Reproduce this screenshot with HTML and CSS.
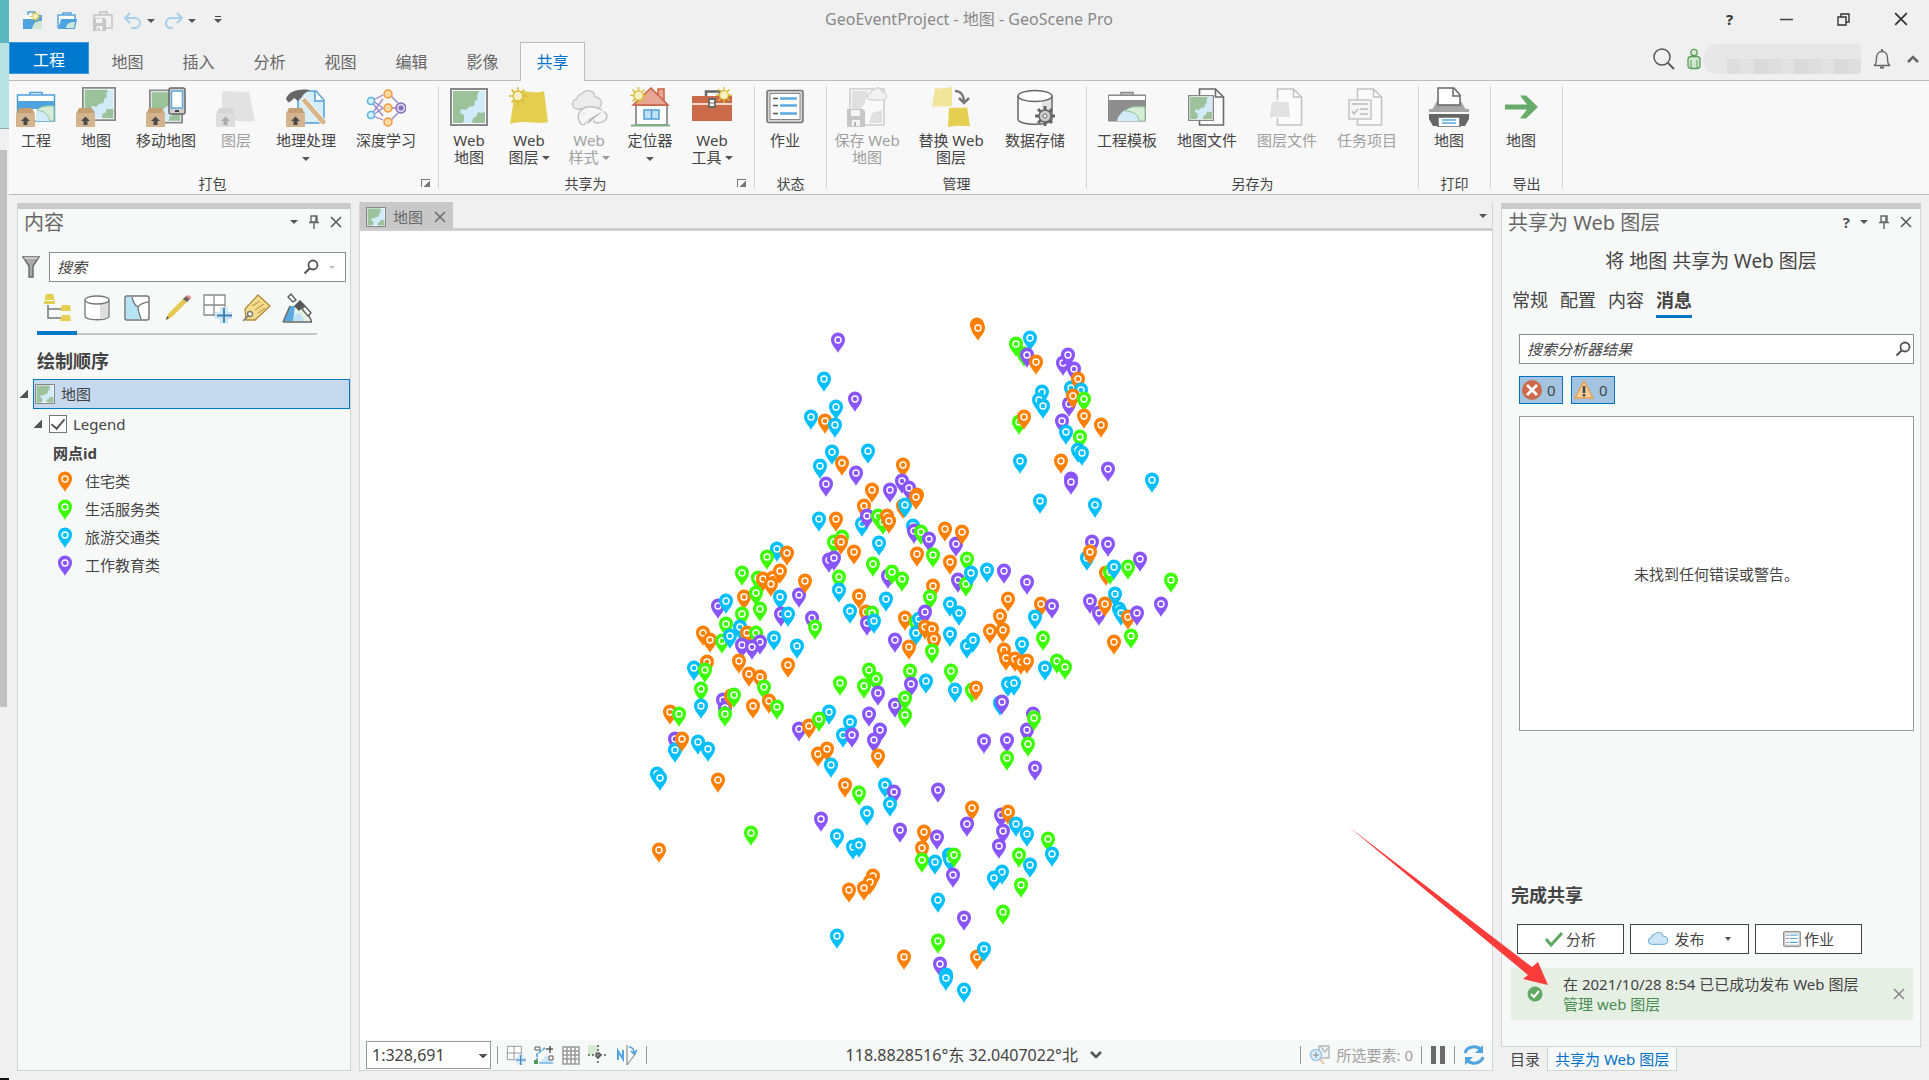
FILE: index.html
```html
<!DOCTYPE html>
<html lang="zh-CN">
<head>
  <meta charset="UTF-8" />
  <meta name="viewport" content="width=device-width, initial-scale=1.0"/>
  <title>GeoEventProject - 地图 - GeoScene Pro</title>
  <link rel="stylesheet" href="styles.css">
</head>
<body>

  <!-- shared icons -->
  <svg class="defs" width="0" height="0" aria-hidden="true">
    <symbol id="i-box" viewBox="0 0 40 40">
      <path d="M3 21h13l3 6H0z" fill="#c39f72"/><path d="M0 26h19v14H0z" fill="#d4b48f"/>
      <path d="M9.500 29.500l4.500 4.500h-2.500v4h-4v-4H5z" fill="#4a4a4a"/>
    </symbol>
    <symbol id="i-map" viewBox="0 0 38 38">
      <path d="M1 1h36v36H1z" fill="#fff" stroke="#888" stroke-width="2"/>
      <path d="M3 3h32v32H3z" fill="#d3eaf8"/>
      <path d="M3 3h26l-2 5 1 3-3 2-1 5-5 1-3 3-5-1-1 4 4 2v6l-2 2H3z" fill="#9cc29b"/>
      <path d="M22 35l1-5 3-1 2-5 3 1 4-1v11z" fill="#9cc29b"/>
    </symbol>
    <symbol id="i-sun" viewBox="0 0 18 18">
      <path d="M9 0v18M0 9h18M2.600 2.600l12.800 12.800M15.400 2.600L2.600 15.400" stroke="#d9bb35" stroke-width="1.500"/>
      <circle cx="9" cy="9" r="5" fill="#f8f0c0" stroke="#d9bb35" stroke-width="1.300"/>
    </symbol>
    <symbol id="i-page" viewBox="0 0 26 38">
      <path d="M1 1h16l8 8v28H1z" fill="#fbfbfb" stroke="currentColor" stroke-width="1.600"/>
      <path d="M17 1v8h8" fill="none" stroke="currentColor" stroke-width="1.600"/>
    </symbol>
    <symbol id="i-floppy" viewBox="0 0 18 18">
      <path d="M0 0h16l2 2v16H0z" fill="#c6c6c6"/><path d="M4 1h9v6H4zM5 11h8v6H5z" fill="#f4f4f4"/><path d="M7 13h2v4H7z" fill="#b5b5b5"/>
    </symbol>
    <symbol id="i-cloud" viewBox="0 0 30 20">
      <path d="M6 19a5 5 0 0 1-1-10 5 5 0 0 1 5-5 7 7 0 0 1 13 3 6 6 0 0 1 1 12z" stroke="currentColor" stroke-width="1.300"/>
    </symbol>
    <symbol id="i-list" viewBox="0 0 38 34">
      <rect x="1" y="1" width="36" height="32" rx="2" fill="#d6d6d6" stroke="#777" stroke-width="1.600"/>
      <path d="M4 4h30v26H4z" fill="#fff" stroke="#888"/>
      <path d="M7 9h5M7 16h5M7 24h5" stroke="#555" stroke-width="1.600"/>
      <path d="M14 9h17M14 16h17M14 24h17" stroke="#5aa9e0" stroke-width="2.500"/>
    </symbol>
    <symbol id="i-pushpin" viewBox="0 0 12 14">
      <path d="M3 1h6v6H3zM1 7.500h10M6 8v6M8 1v6" fill="none" stroke="#666" stroke-width="1.400"/>
    </symbol>
    <symbol id="i-x" viewBox="0 0 12 12">
      <path d="M1 1l10 10M11 1L1 11" stroke="currentColor" stroke-width="1.500"/>
    </symbol>
    <symbol id="i-find" viewBox="0 0 16 16">
      <circle cx="10" cy="6" r="4.500" fill="none" stroke="#555" stroke-width="1.800"/><path d="M7 9l-5.500 5.500" stroke="#555" stroke-width="2.200"/>
    </symbol>
    <symbol id="i-grid-add" viewBox="0 0 30 30">
      <path d="M2 2h21v20H2zM12 2v20M2 12h21" fill="#fff" stroke="#8a8a8a" stroke-width="1.300"/>
      <path d="M13 19h5v-5h8v5h4v7h-4v4h-8v-4h-5z" fill="#cfe6f7"/>
      <path d="M22 15v15M15 22.500h15" stroke="#3c7fb5" stroke-width="1.800"/>
    </symbol>
    <symbol id="i-pin" viewBox="-8 -8 16 21" overflow="visible">
      <path d="M0 13C-1.500 9-7 5.500-7-.5a7 7 0 0 1 14 0C7 5.500 1.500 9 0 13z" fill="currentColor"/>
      <circle r="3" fill="none" stroke="#fff" stroke-width="1.400"/>
    </symbol>
  </svg>

  <div class="behind">
    <div class="behind-top"></div>
    <div class="behind-mid"></div>
    <div class="behind-gap"></div>
    <div class="behind-thumb"></div>
    <div class="behind-rest"></div>
  </div>

  <div class="app">
    <header class="titlebar">
      <div class="quick">
        <button class="icon-btn" aria-label="新建工程"><svg width="22" height="20" viewBox="0 0 22 20"><path d="M6 4V1h7v3" fill="none" stroke="#55a3dc" stroke-width="1.500"/><path d="M1 4h19v14H1z" fill="#4fa3de"/><path d="M1 4h10v4H1z" fill="#fff"/><path d="M10 18c1-6 4-8 10-8v8z" fill="#cfe8d5"/><use href="#i-sun" x="8" y="0" width="11" height="11"/></svg></button>
        <button class="icon-btn" aria-label="打开工程"><svg width="22" height="20" viewBox="0 0 22 20"><path d="M6 4V2h8v2M1 17V4h17v4" fill="#fff" stroke="#55a3dc" stroke-width="1.500"/><path d="M1 18L4 8h16l-2 10z" fill="#4fa3de"/><path d="M9 17c1-5 4-6 9-6l-1 6z" fill="#cfe8d5"/></svg></button>
        <button class="icon-btn" aria-label="保存工程"><svg width="22" height="20" viewBox="0 0 22 20"><path d="M8 4V1h7v3M2 10V4h18v13h-6" fill="none" stroke="#c4c4c4" stroke-width="1.500"/><use href="#i-floppy" x="1" y="7" width="13" height="13"/></svg></button>
        <button class="icon-btn undo" aria-label="撤消"><svg width="18" height="18" viewBox="0 0 18 18"><path d="M6 1L1 6l5 5M1 6h10a5 5 0 0 1 0 10H7" fill="none" stroke="#a9d0e8" stroke-width="2"/></svg></button>
        <i class="caret"></i>
        <button class="icon-btn undo" aria-label="恢复"><svg width="18" height="18" viewBox="0 0 18 18"><path d="M12 1l5 5-5 5M17 6H7a5 5 0 0 0-2 10h3" fill="none" stroke="#a9d0e8" stroke-width="2"/></svg></button>
        <i class="caret"></i>
        <i class="caret caret-line"></i>
      </div>
      <div class="window-title">GeoEventProject - 地图 - GeoScene Pro</div>
      <div class="window-btns">
        <button aria-label="帮助"><b>?</b></button>
        <button aria-label="最小化"><svg width="13" height="13"><path d="M0 6.500h13" stroke="#444" stroke-width="1.500"/></svg></button>
        <button aria-label="还原"><svg width="13" height="13" viewBox="0 0 13 13"><path d="M1 4h8v8H1zM4 4V1h8v8H9" fill="none" stroke="#333" stroke-width="1.400"/></svg></button>
        <button aria-label="关闭"><svg width="14" height="14" viewBox="0 0 12 12"><use href="#i-x"/></svg></button>
      </div>
    </header>

    <nav class="tabs">
      <a href="#" class="tab-file">工程</a>
      <a href="#">地图</a>
      <a href="#">插入</a>
      <a href="#">分析</a>
      <a href="#">视图</a>
      <a href="#">编辑</a>
      <a href="#">影像</a>
      <a href="#" class="active">共享</a>
      <div class="account">
        <svg width="22" height="22" viewBox="0 0 22 22"><circle cx="9" cy="9" r="8" fill="none" stroke="#555" stroke-width="1.500"/><path d="M15 15l6 6" stroke="#555" stroke-width="1.800"/></svg>
        <svg width="14" height="22" viewBox="0 0 14 22"><circle cx="7" cy="4.500" r="3.200" fill="#d9edd8" stroke="#5a9e5a" stroke-width="1.300"/><rect x="1" y="8.500" width="12" height="12" rx="3" fill="#cfe8cf" stroke="#5a9e5a" stroke-width="1.300"/><path d="M4 12v8M10 12v8" stroke="#5a9e5a"/></svg>
        <div class="masked"><i></i><i></i><i></i><i></i><i></i><i></i><i></i><i></i><i></i><i></i></div>
        <svg class="bell" width="18" height="20" viewBox="0 0 18 20"><path d="M1 16.500c2.500-1 2.500-4 2.500-7.500 0-3.500 2-6.500 5.500-6.500S14.500 5.500 14.500 9c0 3.500 0 6.500 2.500 7.500z" fill="none" stroke="#666" stroke-width="1.400"/><path d="M7 18.500h4M9 0v2" stroke="#666" stroke-width="1.800"/></svg>
        <svg width="12" height="8" viewBox="0 0 12 8"><path d="M1 7l5-5 5 5" fill="none" stroke="#666" stroke-width="2.600"/></svg>
      </div>
    </nav>

    <section class="ribbon">
      <div class="group">
        <div class="group-btns">
          <button><svg viewBox="0 0 40 40"><path d="M14 8V5.500h12V8" fill="none" stroke="#4f9fd8" stroke-width="1.500"/><path d="M1.500 8h37v26h-37z" fill="#fff" stroke="#4f9fd8" stroke-width="1.500"/><path d="M2 14h36v8H2z" fill="#4fa3de"/><path d="M20 34V24c3-4 9-6 18-5v15z" fill="#d3eaf8"/><path d="M21 23c4-4 9-4 17-4v15h-4c-2-7-6-10-13-11z" fill="#d5ecd6" stroke="#8fc49a"/><use href="#i-box"/></svg>工程</button>
          <button><svg viewBox="0 0 40 40"><use href="#i-map" x="6" y="0" width="34" height="34"/><use href="#i-box"/></svg>地图</button>
          <button class="wide"><svg viewBox="0 0 40 40"><use href="#i-map" x="3" y="2" width="34" height="35"/><use href="#i-box"/><rect x="23" y="1" width="16" height="26" rx="2" fill="#d0d0d0" stroke="#666" stroke-width="1.500"/><path d="M25.500 4h11v17h-11z" fill="#fff" stroke="#5aa9e0" stroke-width="1.500"/><path d="M29 24h4" stroke="#444" stroke-width="2"/></svg>移动地图</button>
          <button disabled><svg viewBox="0 0 40 40" class="faded"><path d="M6 5c9-3 16 2 27-1l6 30c-12 2-19-3-33 1z" fill="#e2e2e2"/><path d="M3 21h13l3 6H0z" fill="#d5d5d5"/><path d="M0 26h19v14H0z" fill="#dedede"/><path d="M9.500 29.500l4.500 4.500h-2.500v4h-4v-4H5z" fill="#aaa"/></svg>图层</button>
          <button class="wide"><svg viewBox="0 0 40 40"><path d="M12 4h18l8 9v23H12z" fill="#d7edfa" stroke="#4f9fd8" stroke-width="1.500"/><path d="M29 4v10h9" fill="#fff" stroke="#4f9fd8" stroke-width="1.500"/><path d="M15 14l4-4 21 24c1 3-3 5-5 3z" fill="#d9b58b" stroke="#fff"/><path d="M0 12c2-6 9-11 24-9-4 2-7 4-8 7l-4 4-4-3c-2 2-4 5-6 4z" fill="#666"/><use href="#i-box"/></svg>地理处理<i class="caret"></i></button>
          <button class="wide"><svg viewBox="0 0 40 40"><path d="M5 14l12 15M5 14l12-6M5 28l12-16M5 28l12 5M7 14l10 7M7 28l10-7M24 8l8 8M24 21h7M24 34l8-8" stroke="#9a86c8" stroke-width="1.300"/><g fill="#d7effb" stroke="#55b3df" stroke-width="1.500"><circle cx="5" cy="14" r="3.500"/><circle cx="5" cy="28" r="3.500"/></g><g fill="#fbd9a0" stroke="#ee9a3a" stroke-width="1.500"><circle cx="22" cy="7" r="4"/><circle cx="22" cy="21" r="4"/><circle cx="22" cy="35" r="4"/></g><circle cx="35" cy="21" r="5" fill="#ded5f2" stroke="#8570b8" stroke-width="1.500"/><circle cx="35" cy="21" r="2.500" fill="#8570b8"/></svg>深度学习</button>
        </div>
        <div class="group-foot"><span>打包</span><i class="launcher"></i></div>
      </div>

      <div class="group">
        <div class="group-btns">
          <button><svg viewBox="0 0 40 40"><use href="#i-map" x="1" y="1" width="38" height="38"/></svg>Web<br>地图</button>
          <button><svg viewBox="0 0 40 40"><path d="M6 5c10-3 17 3 29-1l4 31c-12 3-22-3-38 2z" fill="#e4cf50"/><use href="#i-sun" x="0" y="0" width="18" height="18"/></svg>Web<br><span>图层<i class="caret"></i></span></button>
          <button disabled><svg viewBox="0 0 40 40" fill="#ececec"><g color="#c4c4c4"><use href="#i-cloud" x="2" y="3" width="32" height="20"/></g><path d="M12 37c-5-6-3-15 6-17 9-1 18 3 20 9 0 5-6 7-10 7-5 0-3-5-7-4-4 2-5 8-9 5z" fill="#f6f6f6" stroke="#c0c0c0" stroke-width="1.500"/><circle cx="15" cy="27" r="2"/><path d="M38 21L23 34l-6 5 2-7z" fill="#bdbdbd" stroke="#fff"/></svg>Web<br><span>样式<i class="caret"></i></span></button>
          <button class="loc"><svg viewBox="0 0 40 40"><path d="M28 10V2h6v14" fill="#e8a795" stroke="#cc6040" stroke-width="1.500"/><path d="M6 18h31v20H6z" fill="#fff" stroke="#777" stroke-width="1.500"/><path d="M3 18L21 1l17 17z" fill="#e8a795" stroke="#cc6040" stroke-width="1.500"/><path d="M14 23h15v9H14zM21.500 23v9" fill="#bfe0f5" stroke="#4f9fd8" stroke-width="1.500"/><path d="M1 38.500h39" stroke="#7fb07f" stroke-width="2"/><use href="#i-sun" x="0" y="0" width="17" height="17"/></svg>定位器<i class="caret"></i></button>
          <button class="loc"><svg viewBox="0 0 40 40"><path d="M14 10V4.500h14V10" fill="none" stroke="#666" stroke-width="2.500"/><path d="M0 9h40v25H0z" fill="#ca6a49"/><path d="M0 17h40" stroke="#fff" stroke-width="1.500"/><path d="M17 12h6v8h-6z" fill="#fff" stroke="#666" stroke-width="1.800"/><path d="M17 16h6" stroke="#666"/><use href="#i-sun" x="24" y="0" width="16" height="16"/></svg>Web<br><span>工具<i class="caret"></i></span></button>
        </div>
        <div class="group-foot"><span>共享为</span><i class="launcher"></i></div>
      </div>

      <div class="group">
        <div class="group-btns">
          <button><svg viewBox="0 0 40 40"><use href="#i-list" x="1" y="2" width="38" height="35"/></svg>作业</button>
        </div>
        <div class="group-foot"><span>状态</span></div>
      </div>

      <div class="group">
        <div class="group-btns">
          <button disabled class="wide"><svg viewBox="0 0 40 40"><path d="M3 2h34v36H3z" fill="#fafafa" stroke="#ccc" stroke-width="1.500"/><path d="M5 4h16l-3 12-6 8H5zM22 36l3-10 10-3v13z" fill="#e0e0e0"/><g color="#c0c0c0" fill="#f2f2f2"><use href="#i-cloud" x="20" y="0" width="20" height="14"/></g><use href="#i-floppy" x="0" y="22" width="18" height="18"/></svg>保存 Web<br>地图</button>
          <button class="wider"><svg viewBox="0 0 40 40"><path d="M4 1c7 1 10 0 17-1v19c-7 2-12-1-20 1z" fill="#f1e59b"/><path d="M18 21c7-1 12 1 18-1l3 19c-8 0-13-1-22 1z" fill="#e4cf50"/><path d="M24 4c6 0 9 5 9 11M28 11l5 5 5-5" fill="none" stroke="#777" stroke-width="2.500"/></svg>替换 Web<br>图层</button>
          <button class="wide"><svg viewBox="0 0 40 40"><path d="M3 9v23c0 7 34 7 34 0V9" fill="#fafafa" stroke="#666" stroke-width="1.500"/><path d="M27 14l9-4v14h-9z" fill="#e2e2e2"/><ellipse cx="20" cy="9" rx="17" ry="5.500" fill="#fff" stroke="#666" stroke-width="1.500"/><path d="M30 19v20M20 29h20M23 22l14 14M37 22L23 36" stroke="#666" stroke-width="3"/><circle cx="30" cy="29" r="6" fill="#ccc" stroke="#666" stroke-width="1.500"/><circle cx="30" cy="29" r="2" fill="#fff" stroke="#666"/></svg>数据存储</button>
        </div>
        <div class="group-foot"><span>管理</span></div>
      </div>

      <div class="group">
        <div class="group-btns">
          <button class="wide"><svg viewBox="0 0 40 40"><path d="M14 8V5.500h12V8" fill="#ccc" stroke="#888" stroke-width="1.500"/><path d="M1.500 8h37v26h-37z" fill="#8e8e8e" stroke="#888"/><path d="M2 9h36v4H2z" fill="#fff"/><path d="M10 34c2-9 9-15 28-14v14z" fill="#d3eaf8"/><path d="M18 24c4-4 9-5 20-4v14h-6c0-6-6-10-14-10z" fill="#d5ecd6" stroke="#8fc49a"/></svg>工程模板</button>
          <button class="wide"><svg viewBox="0 0 40 40" color="#6a6a6a"><use href="#i-page" x="10" y="1" width="29" height="38"/><use href="#i-map" x="1" y="8" width="26" height="26"/></svg>地图文件</button>
          <button disabled class="wide"><svg viewBox="0 0 40 40" color="#c4c4c4"><use href="#i-page" x="8" y="1" width="29" height="38"/><path d="M4 15c6-3 12 1 18-1l2 17c-7 0-14-2-22 1z" fill="#e2e2e2" stroke="#fff"/></svg>图层文件</button>
          <button disabled class="wide"><svg viewBox="0 0 40 40" color="#c4c4c4"><use href="#i-page" x="8" y="1" width="29" height="38"/><path d="M2 13h22v19H2z" fill="#f6f6f6" stroke="#c4c4c4" stroke-width="1.500"/><path d="M5 17h16M13 22h8M13 27h8M5 24l2 3 4-5" fill="none" stroke="#bbb" stroke-width="1.500"/></svg>任务项目</button>
        </div>
        <div class="group-foot"><span>另存为</span></div>
      </div>

      <div class="group">
        <div class="group-btns">
          <button><svg viewBox="0 0 40 40"><path d="M3 23l5-9h24l5 9z" fill="#a5a5a5"/><path d="M9 18V1h16l6 7v10z" fill="#fff" stroke="#666" stroke-width="1.500"/><path d="M24 1v8h7" fill="none" stroke="#666" stroke-width="1.500"/><path d="M0 22h40v3H0z" fill="#a5a5a5"/><path d="M0 27h40v5l-4 7H4l-4-7z" fill="#666"/><path d="M9 30h22v10H9z" fill="#fff" stroke="#666" stroke-width="1.500"/><path d="M13 33h14M13 36h14" stroke="#5aa9e0" stroke-width="1.500"/></svg>地图</button>
        </div>
        <div class="group-foot"><span>打印</span></div>
      </div>

      <div class="group">
        <div class="group-btns">
          <button><svg viewBox="0 0 40 40"><path d="M4 17.500h22l-7-9h6l12 11.500-12 11.500h-6l7-9H4z" fill="#67ac6b"/></svg>地图</button>
        </div>
        <div class="group-foot"><span>导出</span></div>
      </div>
    </section>

    <main class="work">
      <aside class="pane contents">
        <div class="pane-head">
          <h2>内容</h2>
          <i class="caret"></i>
          <button class="icon-btn" aria-label="固定"><svg width="12" height="14"><use href="#i-pushpin"/></svg></button>
          <button class="icon-btn" aria-label="关闭"><svg width="12" height="12"><use href="#i-x"/></svg></button>
        </div>
        <div class="filter-row">
          <svg width="18" height="22" viewBox="0 0 18 22"><path d="M1 1h16l-6 9v11H7V10z" fill="#aaa" stroke="#666" stroke-width="1.400"/><path d="M2 2h14" stroke="#fff"/></svg>
          <div class="search">
            <input type="text" placeholder="搜索" aria-label="搜索">
            <svg width="16" height="16"><use href="#i-find"/></svg>
            <i class="caret light"></i>
          </div>
        </div>
        <div class="list-by">
          <button class="active" aria-label="按绘制顺序列出"><svg viewBox="0 0 30 30"><path d="M6 12v13h13M6 16h13" fill="none" stroke="#777" stroke-width="1.500"/><path d="M4 1h7l1.500 6h-10zM2 8h11v3H2zM20 12h8l1 6H18zM20 22h8l1 6H18z" fill="#e4cf50"/></svg></button>
          <button aria-label="按数据源列出"><svg viewBox="0 0 30 30"><path d="M3 7v16c0 5 24 5 24 0V7" fill="#fff" stroke="#777" stroke-width="1.300"/><path d="M18 11l8-3v16l-8 2z" fill="#ddd"/><ellipse cx="15" cy="7" rx="12" ry="4" fill="#fff" stroke="#777" stroke-width="1.300"/></svg></button>
          <button aria-label="按选择列出"><svg viewBox="0 0 30 30"><rect x="3" y="3" width="24" height="24" rx="2" fill="#fff" stroke="#777" stroke-width="1.500"/><path d="M4 4h6c1 5 2 8 6 10 0 5 2 8 3 12H4z" fill="#b5e5f7"/><path d="M10 4c1 5 2 8 6 10 0 5 2 8 3 12M16 14c3-4 6-4 10-5" fill="none" stroke="#777" stroke-width="1.300"/></svg></button>
          <button aria-label="按编辑列出"><svg viewBox="0 0 30 30"><path d="M4 27l2-6L22 5l4 3L10 24z" fill="#e4c950"/><path d="M4 27l1-4 2 2z" fill="#555"/><path d="M21 6l3-3 4 3-3 3z" fill="#666"/><path d="M24 3l3-1 2 2-1 3z" fill="#e88"/></svg></button>
          <button aria-label="按捕捉列出"><svg viewBox="0 0 30 30"><use href="#i-grid-add"/></svg></button>
          <button aria-label="按标注列出"><svg viewBox="0 0 30 30"><path d="M3 16L16 2l12 11-15 14H4z" fill="#f3dd8c" stroke="#b08a3e" stroke-width="1.300"/><path d="M10 13l8-5M13 17l9-6M16 20l7-5" stroke="#b08a3e"/><circle cx="8" cy="21" r="2.500" fill="#fff" stroke="#777" stroke-width="1.300"/><path d="M7 22l-6 6" stroke="#777" stroke-width="1.500"/></svg></button>
          <button aria-label="按影像列出"><svg viewBox="0 0 30 30"><path d="M8 13h16l6 16H1z" fill="#e6f2e4"/><path d="M8 13h5l-2 15H2z" fill="#5aa9e0"/><path d="M11 28c0-10 10-10 11 0z" fill="#bfe0f5"/><path d="M1 29L8 13M30 29H1M30 29l-4-8" fill="none" stroke="#666" stroke-width="1.500"/><path d="M12 13l6-6 5 5-6 6z" fill="#555"/><path d="M6 4l3-3 5 6-3 2zM20 16l3-3 6 7-3 3z" fill="#fff" stroke="#555" stroke-width="1.300"/></svg></button>
        </div>
        <h3>绘制顺序</h3>
        <ul class="tree">
          <li class="node map-node"><i class="expander"></i><a href="#"><svg width="20" height="20"><use href="#i-map"/></svg>地图</a></li>
          <li class="node layer-node"><i class="expander"></i><label><input type="checkbox" checked>Legend</label></li>
          <li class="field">网点id</li>
          <li class="cls"><svg class="orange"><use href="#i-pin"/></svg>住宅类</li>
          <li class="cls"><svg class="green"><use href="#i-pin"/></svg>生活服务类</li>
          <li class="cls"><svg class="blue"><use href="#i-pin"/></svg>旅游交通类</li>
          <li class="cls"><svg class="purple"><use href="#i-pin"/></svg>工作教育类</li>
        </ul>
      </aside>

      <section class="view">
        <div class="view-tabs">
          <a href="#"><svg width="20" height="20"><use href="#i-map"/></svg>地图<svg class="tab-x" width="12" height="12"><use href="#i-x"/></svg></a>
          <i class="caret"></i>
        </div>
        <svg class="map" role="img" aria-label="地图"><g id="pins" transform="translate(-360 -230)"></g></svg>
        <div class="statusbar">
          <select aria-label="比例尺"><option>1:328,691</option></select>
          <i class="sep"></i>
          <button class="icon-btn" aria-label="捕捉"><svg width="20" height="20"><use href="#i-grid-add"/></svg></button>
          <button class="icon-btn" aria-label="推断"><svg width="20" height="20" viewBox="0 0 20 20"><path d="M5 19l7-9 8 9z" fill="#cfe6f7"/><path d="M1 2h5v3H1zM15 11h4v4h-4z" fill="#fff" stroke="#555"/><path d="M12 4h7M16 1v7" stroke="#555" stroke-width="1.500"/><path d="M3 17V9l8-6" fill="none" stroke="#4fa3de" stroke-width="1.600" stroke-dasharray="4 1"/><path d="M5 18h14" stroke="#4fa3de"/><path d="M0 15h4v4H0z" fill="#4f9a55"/></svg></button>
          <button class="icon-btn" aria-label="格网"><svg width="18" height="20" viewBox="0 0 18 20"><path d="M1 2h16v17H1zM5 2v17M9 2v17M13 2v17M1 6h16M1 10h16M1 14h16" fill="#fff" stroke="#999" stroke-width="1.500"/></svg></button>
          <button class="icon-btn" aria-label="约束"><svg width="20" height="20" viewBox="0 0 20 20"><path d="M0 0h10v10H0z" fill="#d5ecd2"/><path d="M10 0v20M0 10h20" stroke="#555" stroke-width="1.500" stroke-dasharray="2 2"/><path d="M8 8h4v4H8z" fill="#888" stroke="#444"/></svg></button>
          <button class="icon-btn" aria-label="旋转"><svg width="22" height="20" viewBox="0 0 22 20"><path d="M2 15V6l5 8V5" fill="none" stroke="#4fa3de" stroke-width="2"/><path d="M11 0v20l9-12" fill="none" stroke="#777"/><path d="M13 2c4 0 5 3 5 6M15 6l3 3 3-4" fill="none" stroke="#4fa3de" stroke-width="1.600"/></svg></button>
          <i class="sep"></i>
          <div class="coords">118.8828516°东 32.0407022°北 <svg width="12" height="10" viewBox="0 0 12 10"><path d="M1 2l5 5 5-5" fill="none" stroke="#555" stroke-width="2.600"/></svg></div>
          <i class="sep"></i>
          <div class="selected"><svg width="22" height="20" viewBox="0 0 22 20"><path d="M10 1h10v12h-9zM12 2l4 5 4-5" fill="#eef4f8" stroke="#b5b5b5" stroke-width="1.300"/><circle cx="7" cy="10" r="5.500" fill="#dceefa" stroke="#9cc9e6" stroke-width="1.500"/><path d="M4 10h6M7 7v6" stroke="#888"/><path d="M11 14l4 5" stroke="#e8bf98" stroke-width="2"/></svg>所选要素: 0</div>
          <i class="sep"></i>
          <button class="icon-btn" aria-label="暂停"><svg width="16" height="18"><path d="M1 0h5v18H1zM10 0h5v18h-5z" fill="#6b6b6b"/></svg></button>
          <i class="sep"></i>
          <button class="icon-btn" aria-label="刷新"><svg width="22" height="20" viewBox="0 0 22 20"><path d="M2 8C4 1 14 0 18 5M20 12c-2 7-12 8-16 3" fill="none" stroke="#4fa3de" stroke-width="3"/><path d="M20 0v8h-8zM2 20v-8h8z" fill="#4fa3de"/></svg></button>
        </div>
      </section>

      <div class="side">
        <aside class="pane share">
          <div class="pane-head">
            <h2>共享为 Web 图层</h2>
            <button class="icon-btn" aria-label="帮助"><b>?</b></button>
            <i class="caret"></i>
            <button class="icon-btn" aria-label="固定"><svg width="12" height="14"><use href="#i-pushpin"/></svg></button>
            <button class="icon-btn" aria-label="关闭"><svg width="12" height="12"><use href="#i-x"/></svg></button>
          </div>
          <h4>将 地图 共享为 Web 图层</h4>
          <nav class="share-tabs">
            <a href="#">常规</a>
            <a href="#">配置</a>
            <a href="#">内容</a>
            <a href="#" class="active">消息</a>
          </nav>
          <div class="results">
            <div class="search">
              <input type="text" placeholder="搜索分析器结果" aria-label="搜索分析器结果">
              <svg width="16" height="16"><use href="#i-find"/></svg>
            </div>
            <div class="counts">
              <button><svg width="20" height="20" viewBox="0 0 20 20"><circle cx="10" cy="10" r="10" fill="#cd6a4c"/><path d="M5 5l10 10M15 5L5 15" stroke="#fff" stroke-width="2.800"/></svg>0</button>
              <button><svg width="20" height="20" viewBox="0 0 20 20"><path d="M10 1l9 17H1z" fill="#f9d09a" stroke="#e5a050" stroke-width="1.500"/><path d="M10 6v7M10 14v2.500" stroke="#444" stroke-width="2.600"/></svg>0</button>
            </div>
            <div class="messages">未找到任何错误或警告。</div>
          </div>
          <h3>完成共享</h3>
          <div class="actions">
            <button><svg width="18" height="16" viewBox="0 0 18 16"><path d="M1 8l5 6L17 2" fill="none" stroke="#5fa963" stroke-width="3"/></svg>分析</button>
            <button class="publish"><svg width="20" height="20" viewBox="0 0 30 22" fill="#cfe6f7" color="#4f9fd8"><use href="#i-cloud" width="30" height="20"/></svg>发布<i class="caret"></i></button>
            <button><svg width="18" height="18"><use href="#i-list"/></svg>作业</button>
          </div>
          <div class="notice">
            <svg width="16" height="16" viewBox="0 0 16 16"><circle cx="8" cy="8" r="7.500" fill="#5fa963"/><path d="M4 8l3 3 5-6" fill="none" stroke="#fff" stroke-width="2"/></svg>
            <p>在 2021/10/28 8:54 已已成功发布 Web 图层<br><a href="#">管理 web 图层</a></p>
            <button class="icon-btn" aria-label="关闭"><svg width="12" height="12"><use href="#i-x"/></svg></button>
          </div>
        </aside>
        <nav class="pane-tabs">
          <a href="#">目录</a>
          <a href="#" class="active">共享为 Web 图层</a>
        </nav>
      </div>

      <!-- callout pointing at the success notice -->
      <svg class="callout" width="199" height="158" viewBox="0 0 199 158"><path d="M0 0l183 140 6-5 10 23-25-6 5-4z" fill="#fb3c3a"/></svg>
    </main>
  </div>

  <script src="script.js"></script>
</body>
</html>
```

FILE: styles.css
```css
* { box-sizing: border-box; }
body { margin: 0; height: 100vh; display: flex; overflow: hidden; background: #f0f0f0; color: #444; font-family: "Noto Sans", "Noto Sans CJK SC", sans-serif; font-size: 15px; line-height: 20px; }
button, input, select { font: inherit; color: inherit; }
button { border: 0; padding: 0; background: none; }
a { color: inherit; text-decoration: none; }
h2, h3, h4, p, ul { margin: 0; padding: 0; }
svg { flex: none; display: block; }
.defs { position: absolute; }
.icon-btn { display: flex; align-items: center; justify-content: center; }

.caret { display: inline-block; flex: none; border: 4px solid transparent; border-top-color: #555; border-bottom: 0; }
.caret.light { border-top-color: #bbb; border-width: 3px 3px 0; }
.orange { color: #ff8000; }
.green { color: #3cff00; }
.blue { color: #00bfff; }
.purple { color: #8855ff; }

/* edge of the window behind */
.behind { width: 9px; flex: none; display: flex; flex-direction: column; border-bottom: 2px solid #111; }
.behind-top { height: 43px; background: #5bb8c0; }
.behind-mid { height: 86px; background: #b9e2e4; border-bottom: 1px solid #8fa9ab; }
.behind-gap { height: 21px; }
.behind-thumb { flex: 3; width: 7px; background: #c1c1c1; }
.behind-rest { flex: 2; }

.app { flex: 1; min-width: 0; display: flex; flex-direction: column; }

.titlebar { display: grid; grid-template-columns: 1fr auto 1fr; height: 42px; }
.quick { display: flex; align-items: center; gap: 13px; padding-left: 13px; }
.quick .undo { width: 18px; margin: 0 -8px 0 -3px; }
.caret-line { margin-left: 5px; position: relative; }
.caret-line::before { content: ""; position: absolute; left: -3px; top: -7px; width: 6px; height: 1px; background: #444; }
.window-title { font-size: 16px; line-height: 38px; color: #888; }
.window-btns { display: flex; justify-content: flex-end; height: 38px; }
.window-btns button { width: 57px; display: flex; align-items: center; justify-content: center; color: #333; }

.tabs { display: flex; height: 39px; border-bottom: 1px solid #bcbcbc; font-size: 16px; color: #666; }
.tabs a { width: 65px; height: 39px; margin: 0 3px; line-height: 40px; text-align: center; }
.tabs .tab-file { width: 80px; height: 32px; margin: 0 3px 0 0; background: #0078d0; color: #fff; line-height: 34px; border: 1px solid #3a96dd; }
.tabs .active { margin-left: 2px; background: #f8f8f8; border: 1px solid #bcbcbc; border-bottom: 0; color: #0070c8; line-height: 38px; }
.account { margin-left: auto; display: flex; align-items: center; padding: 0 10px 4px 0; gap: 12px; }
.account svg:last-child { margin-left: 4px; }
.masked { width: 158px; height: 30px; margin-left: -10px; border-radius: 15px 4px 4px 15px; background: #e6e7e6; display: flex; align-items: flex-end; overflow: hidden; padding-left: 24px; }
.masked i { flex: 1; height: 15px; background: #dedede; }
.masked i:nth-child(3n) { background: #d9dad9; }
.masked i:nth-child(3n+2) { background: #e2e2e2; }

.ribbon { display: flex; height: 114px; background: #f8f8f8; border-bottom: 1px solid #bcbcbc; padding: 5px 0; }
.group { display: flex; flex-direction: column; justify-content: space-between; padding-right: 11px; border-right: 1px solid #d4d4d4; }
.group:first-child .group-btns { margin: 0 1px 0 -3px; }
.group-btns { display: flex; align-items: flex-start; }
.group-btns button { width: 60px; padding-top: 1px; display: flex; flex-direction: column; align-items: center; line-height: 17px; white-space: nowrap; }
.group-btns .loc { width: 62px; }
.group-btns .wide { width: 80px; }
.group-btns .wider { width: 88px; }
.group-btns svg { width: 40px; height: 40px; margin-bottom: 5px; }
.group-btns button > .caret { margin-top: 8px; }
.group-btns span { display: flex; align-items: center; gap: 3px; }
.group-btns button:disabled { color: #a0a0a0; }
.group-btns button:disabled .caret { border-top-color: #999; }
.group-foot { display: flex; align-items: center; font-size: 14px; line-height: 16px; margin: 0 -11px -3px 0; }
.group-foot span { flex: 1; text-align: center; }
.launcher { width: 9px; height: 8px; margin: 0 8px 2px 5px; border: solid #777; border-width: 1px 0 0 1px; background: linear-gradient(135deg, transparent 60%, #777 60%); }

.work { flex: 1; min-height: 0; display: flex; gap: 8px; padding: 8px 8px 9px; position: relative; }
.pane { background: #f7f9f8; border: 1px solid #d0d3d2; border-top: 6px solid #cacaca; display: flex; flex-direction: column; }
.pane-head { display: flex; align-items: center; height: 28px; padding: 0 8px 3px 6px; gap: 10px; color: #555; }
.pane-head h2 { flex: 1; font-size: 20px; font-weight: 400; color: #666; padding-top: 3px; }
h3 { font-size: 18px; line-height: 24px; }

.contents { width: 334px; }
.filter-row { display: flex; align-items: center; gap: 9px; padding: 15px 4px 0; }
.search { flex: 1; display: flex; align-items: center; gap: 10px; height: 30px; padding-right: 10px; border: 1px solid #8c8c8c; background: #fff; }
.search input { flex: 1; min-width: 0; border: 0; padding: 0 7px; background: none; outline: 0; font-style: italic; }
.search input::placeholder { color: #444; opacity: 1; }
.list-by { display: flex; align-self: flex-start; margin: 7px 0 0 19px; border-bottom: 2px solid #c6c6c6; }
.list-by button { width: 40px; height: 44px; padding: 4px 5px 10px; }
.list-by svg { width: 30px; height: 30px; }
.list-by .active { border-bottom: 4px solid #0078c8; margin-bottom: -2px; height: 46px; padding-bottom: 8px; }
.contents h3 { margin: 14px 0 6px 19px; }

.tree { list-style: none; }
.node { display: flex; align-items: center; height: 30px; }
.expander { width: 8px; height: 8px; background: linear-gradient(135deg, transparent 50%, #555 50%); }
.map-node { padding-left: 2px; gap: 5px; }
.map-node a { flex: 1; display: flex; align-items: center; gap: 6px; height: 30px; padding-left: 1px; background: #c5daee; border: 1px solid #0078c8; }
.layer-node { padding-left: 16px; gap: 7px; }
.layer-node label { display: flex; align-items: center; gap: 6px; }
.layer-node input { appearance: none; width: 18px; height: 18px; margin: 0; border: 1px solid #777; background: #fff; display: grid; place-items: center; }
.layer-node input::before { content: ""; width: 6px; height: 11px; margin-top: -3px; border: solid #555; border-width: 0 2px 2px 0; transform: rotate(40deg); }
.field { padding-left: 35px; font-weight: 700; line-height: 28px; }
.cls { display: flex; align-items: center; gap: 12px; height: 28px; padding-left: 39px; }
.cls svg { width: 16px; height: 21px; }

.view { flex: 1; min-width: 0; display: flex; flex-direction: column; border: solid #d4d4d4; border-width: 0 1px 1px; }
.view-tabs { display: flex; align-items: center; justify-content: space-between; height: 28px; border-bottom: 3px solid #cecece; padding-right: 5px; }
.view-tabs a { display: flex; align-items: center; gap: 7px; height: 27px; padding: 2px 7px 0 6px; background: #c8c8c8; color: #6a6a6a; }
.view-tabs .tab-x { margin-left: 4px; }
.map { flex: 1; min-height: 0; width: 100%; background: #fff; }
.statusbar { display: flex; align-items: center; gap: 8px; height: 30px; padding: 0 7px 0 6px; background: #f7f9f8; font-size: 16px; }
.statusbar select {
  width: 125px; height: 28px; margin-right: -2px; padding: 0 5px; border: 1px solid #999; border-radius: 0; appearance: none;
  background: linear-gradient(to top right, transparent 50%, #555 50%) 112px 12px / 4px 4px no-repeat, linear-gradient(to top left, transparent 50%, #555 50%) 116px 12px / 4px 4px no-repeat, #fff;
}
.statusbar .sep { width: 1px; height: 18px; background: #999; }
.coords { flex: 1; display: flex; align-items: center; justify-content: center; gap: 12px; }
.selected { display: flex; align-items: center; gap: 5px; font-size: 15px; color: #a0a0a0; }

.side { width: 420px; display: flex; flex-direction: column; }
.share { flex: 1; min-height: 0; }
.share h4 { font-size: 19px; font-weight: 400; line-height: 28px; text-align: center; margin-top: 10px; }
.share-tabs { display: flex; gap: 12px; padding: 11px 10px 0; font-size: 18px; line-height: 26px; }
.share-tabs a { padding: 1px 0 2px; }
.share-tabs .active { font-weight: 700; border-bottom: 3px solid #0078c8; }
.results { margin: 16px 6px 0 17px; }
.results .search { padding-right: 2px; }
.counts { display: flex; gap: 8px; margin: 12px 0; }
.counts button { width: 44px; height: 28px; display: flex; align-items: center; gap: 5px; padding-left: 2px; background: #a3c4e0; border: 1px solid #0070c0; }
.messages { display: flex; align-items: center; justify-content: center; height: 315px; border: 1px solid #999; background: #fff; font-size: 15px; }
.share > h3 { margin: auto 0 17px 9px; }
.actions { display: flex; gap: 6px; padding-left: 15px; }
.actions button { width: 107px; height: 30px; display: flex; align-items: center; justify-content: center; gap: 3px; border: 1px solid #444; background: #fff; }
.actions .publish { width: 119px; gap: 6px; }
.publish .caret { margin-left: 14px; border-width: 4px 3px 0; }
.notice { display: flex; align-items: center; height: 52px; margin: 14px 7px 26px 9px; padding: 0 8px 0 16px; background: #e5efe4; }
.notice p { flex: 1; margin-left: 20px; white-space: nowrap; }
.notice a { color: #4a8c50; }
.notice .icon-btn { color: #888; }
.pane-tabs { display: flex; height: 24px; padding-left: 9px; gap: 7px; line-height: 24px; }
.pane-tabs .active { padding: 0 7px; background: #f7f9f8; border: 1px solid #d0d3d2; border-top: 0; color: #0070c8; }

.callout { position: absolute; right: 381px; bottom: 95px; }
```

FILE: script.js
```js
// [colour, x, y, x, y, ...] groups, drawn in order
var pins = [
  ['purple', 838,339, 855,398],
  ['blue', 824,378, 836,406, 811,416],
  ['orange', 825,420],
  ['blue', 835,424, 832,451, 868,450, 820,465],
  ['orange', 842,462],
  ['purple', 856,472, 826,483],
  ['orange', 903,464],
  ['purple', 902,480, 909,487, 890,489],
  ['orange', 872,489, 903,505],
  ['blue', 905,504],
  ['orange', 917,494, 916,496, 864,505],
  ['blue', 862,523],
  ['purple', 867,515],
  ['green', 878,515, 883,521],
  ['orange', 887,515, 889,520],
  ['blue', 913,525],
  ['purple', 914,530],
  ['green', 921,531],
  ['purple', 929,538, 956,543],
  ['orange', 945,528, 962,531],
  ['blue', 819,518, 879,542],
  ['orange', 836,518],
  ['green', 842,536, 834,541],
  ['orange', 841,541, 854,551],
  ['purple', 829,559, 834,557],
  ['blue', 777,548],
  ['orange', 787,552],
  ['green', 767,556],
  ['orange', 917,553],
  ['green', 933,554],
  ['orange', 950,561],
  ['green', 742,572, 758,577],
  ['orange', 763,578, 773,577, 771,583, 780,570],
  ['green', 839,576],
  ['blue', 839,589],
  ['green', 873,563],
  ['purple', 888,575],
  ['green', 892,571, 902,578],
  ['purple', 718,605],
  ['blue', 726,600],
  ['orange', 744,596],
  ['green', 756,592],
  ['blue', 780,596],
  ['purple', 799,594],
  ['orange', 805,580, 859,595],
  ['blue', 886,598],
  ['orange', 933,585],
  ['green', 930,596, 967,558],
  ['blue', 950,603, 959,612],
  ['purple', 958,579],
  ['green', 966,583],
  ['blue', 971,572, 987,569],
  ['purple', 1004,570, 1027,581],
  ['green', 742,613, 760,608, 726,623],
  ['purple', 781,613],
  ['blue', 788,613],
  ['purple', 812,617],
  ['green', 815,626],
  ['blue', 850,610],
  ['orange', 866,611],
  ['green', 872,612],
  ['purple', 867,622],
  ['blue', 874,620],
  ['orange', 905,617],
  ['green', 916,621],
  ['blue', 919,618, 916,632],
  ['purple', 925,611],
  ['orange', 925,626, 932,628, 934,638],
  ['blue', 950,633],
  ['green', 932,650],
  ['orange', 909,646],
  ['purple', 895,639],
  ['blue', 740,626],
  ['orange', 703,632, 710,639],
  ['green', 722,640],
  ['blue', 730,635],
  ['orange', 747,632],
  ['green', 756,632],
  ['purple', 742,644, 760,641, 752,646],
  ['blue', 774,637, 797,645],
  ['orange', 739,660, 707,661],
  ['blue', 694,667],
  ['green', 705,669],
  ['orange', 788,664, 749,673, 760,676],
  ['green', 764,686, 701,688],
  ['purple', 723,699, 725,707],
  ['orange', 731,695],
  ['green', 734,694, 725,713],
  ['blue', 701,705],
  ['orange', 753,705, 769,700],
  ['green', 777,706],
  ['orange', 670,711],
  ['green', 679,713],
  ['purple', 675,738],
  ['blue', 675,749],
  ['orange', 682,738],
  ['blue', 698,741, 708,748, 657,773, 660,777],
  ['orange', 718,779],
  ['green', 840,682, 869,669, 876,678, 864,685],
  ['purple', 878,692],
  ['green', 910,670],
  ['purple', 911,683],
  ['blue', 926,680],
  ['green', 951,670],
  ['blue', 955,689],
  ['purple', 895,704],
  ['green', 905,697, 905,714],
  ['purple', 869,713, 799,728],
  ['blue', 829,711],
  ['orange', 809,725],
  ['green', 819,718],
  ['blue', 850,721, 843,734],
  ['purple', 852,734, 880,729, 874,739],
  ['orange', 878,755, 818,753, 827,748],
  ['blue', 831,764],
  ['orange', 845,784],
  ['green', 859,792],
  ['blue', 885,784],
  ['purple', 894,791],
  ['blue', 890,803, 867,812],
  ['purple', 938,789, 821,818],
  ['blue', 837,835, 853,846, 859,844],
  ['purple', 900,829],
  ['orange', 924,831, 922,847],
  ['purple', 937,836],
  ['green', 922,859],
  ['blue', 935,861],
  ['green', 751,832],
  ['orange', 659,849],
  ['green', 972,689],
  ['orange', 976,687],
  ['blue', 1008,683, 1014,682, 1000,702],
  ['purple', 1002,701, 1033,713, 1027,729],
  ['green', 1034,717, 1028,743],
  ['purple', 1007,739, 984,740, 1035,767],
  ['green', 1007,757],
  ['orange', 972,807],
  ['purple', 967,823, 1001,814, 1003,830, 999,845],
  ['orange', 1008,811],
  ['blue', 1016,823, 1027,833],
  ['green', 1048,838],
  ['blue', 1052,853],
  ['green', 1019,854],
  ['blue', 1030,864, 1002,871, 994,877],
  ['green', 1021,884, 1003,911],
  ['blue', 949,854, 950,858],
  ['green', 954,854],
  ['purple', 953,874],
  ['blue', 938,899],
  ['purple', 964,917],
  ['green', 938,940],
  ['orange', 977,956],
  ['blue', 984,948],
  ['purple', 940,963],
  ['blue', 946,974, 946,977, 964,989],
  ['orange', 904,956],
  ['blue', 837,935],
  ['orange', 849,889, 873,875, 870,881, 864,887],
  ['orange', 977,324, 978,327],
  ['green', 1016,343],
  ['blue', 1030,337],
  ['green', 1024,353],
  ['purple', 1027,354],
  ['orange', 1036,361],
  ['purple', 1063,362, 1068,354, 1074,368],
  ['blue', 1071,387],
  ['orange', 1078,378],
  ['blue', 1081,389],
  ['purple', 1069,403],
  ['orange', 1073,395],
  ['green', 1084,398],
  ['blue', 1042,391, 1039,399, 1043,405],
  ['green', 1019,421],
  ['orange', 1024,416, 1084,415, 1101,424],
  ['purple', 1062,420],
  ['blue', 1066,431],
  ['green', 1080,436],
  ['blue', 1078,449, 1082,452, 1020,460],
  ['orange', 1061,460],
  ['purple', 1108,468, 1071,478, 1071,481],
  ['blue', 1152,479, 1040,500, 1095,504],
  ['purple', 1092,541, 1108,543],
  ['blue', 1087,557],
  ['orange', 1090,551],
  ['purple', 1140,558],
  ['orange', 1106,572],
  ['green', 1110,571],
  ['blue', 1114,566],
  ['green', 1128,566, 1171,579],
  ['blue', 1115,593],
  ['purple', 1090,600, 1099,612],
  ['orange', 1105,603],
  ['blue', 1119,608, 1121,612],
  ['orange', 1128,616],
  ['purple', 1137,612, 1161,603],
  ['green', 1131,635],
  ['orange', 1114,641, 1008,598, 1041,603],
  ['purple', 1052,605],
  ['blue', 1035,616],
  ['orange', 1000,615, 990,630, 1003,629],
  ['blue', 967,645, 973,639],
  ['green', 1043,637],
  ['blue', 1022,643],
  ['orange', 1004,649, 1006,657, 1015,658, 1021,661, 1027,660],
  ['blue', 1045,667],
  ['green', 1057,660, 1065,666]
];

var layer = document.getElementById('pins');
pins.forEach(function (group) {
  for (var i = 1; i < group.length; i += 2) {
    var use = document.createElementNS('http://www.w3.org/2000/svg', 'use');
    use.setAttribute('href', '#i-pin');
    use.setAttribute('class', group[0]);
    use.setAttribute('x', group[i] - 8);
    use.setAttribute('y', group[i + 1] - 8);
    use.setAttribute('width', 16);
    use.setAttribute('height', 21);
    layer.appendChild(use);
  }
});
```
